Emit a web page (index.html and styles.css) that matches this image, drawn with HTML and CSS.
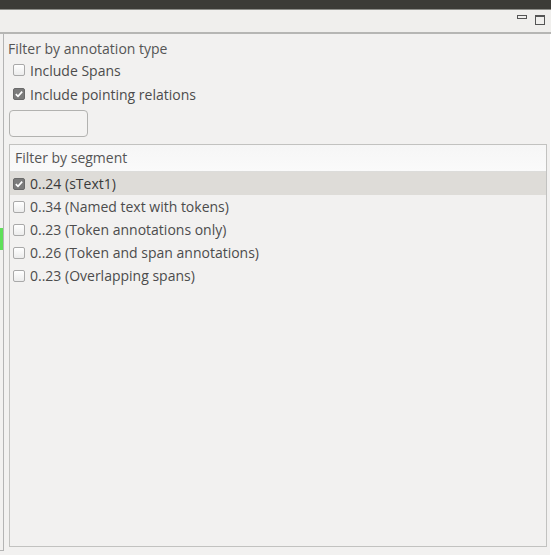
FILE: index.html
```html
<!DOCTYPE html>
<html>
<head>
<meta charset="utf-8">
<link rel="stylesheet" href="styles.css">
</head>
<body>
<div class="titlebar"></div>
<div class="toolbar">
  <span class="tb-min"></span>
  <span class="tb-max"></span>
</div>
<div class="main">
  <div class="stub"><div class="green"></div></div>
  <div class="panel">
    <div class="group-title">Filter by annotation type</div>
    <label class="opt"><span class="cb"></span>Include Spans</label>
    <label class="opt"><span class="cb checked"><svg viewBox="0 0 12 12" width="12" height="12"><path d="M2.8 6.1 L5 8.3 L9.2 3.6" fill="none" stroke="#fff" stroke-width="1.7"/></svg></span>Include pointing relations</label>
    <div class="input"></div>
    <div class="list">
      <div class="list-head">Filter by segment</div>
      <div class="row sel"><span class="cb checked"><svg viewBox="0 0 12 12" width="12" height="12"><path d="M2.8 6.1 L5 8.3 L9.2 3.6" fill="none" stroke="#fff" stroke-width="1.7"/></svg></span>0..24 (sText1)</div>
      <div class="row"><span class="cb"></span>0..34 (Named text with tokens)</div>
      <div class="row"><span class="cb"></span>0..23 (Token annotations only)</div>
      <div class="row"><span class="cb"></span>0..26 (Token and span annotations)</div>
      <div class="row"><span class="cb"></span>0..23 (Overlapping spans)</div>
    </div>
  </div>
</div>
</body>
</html>
```
FILE: styles.css
```css
html, body {
  margin: 0;
  padding: 0;
}
body {
  width: 551px;
  height: 555px;
  overflow: hidden;
  background: #f2f1f0;
  font-family: "Open Sans", "DejaVu Sans", sans-serif;
  font-size: 13px;
  color: #4c4c4c;
}
.titlebar {
  height: 9px;
  background: #3c3b37;
  border-bottom: 1px solid #8c8c88;
}
.toolbar {
  height: 22px;
  background: #f0efed;
  border-bottom: 2px solid #b6b6b4;
  display: flex;
  justify-content: flex-end;
  align-items: flex-start;
  padding-right: 6px;
}
.tb-min {
  width: 8px;
  height: 2px;
  border: 1px solid #555;
  margin-top: 5px;
  margin-right: 8px;
}
.tb-max {
  width: 8px;
  height: 7px;
  border: 1px solid #555;
  border-top-width: 2px;
  margin-top: 5px;
}
.main {
  display: flex;
  height: 521px;
}
.stub {
  width: 3px;
  height: 322px;
  border-right: 1px solid #b4b4b4;
  border-bottom: 1px solid #b4b4b4;
  padding-top: 194px;
}
.green {
  width: 3px;
  height: 22px;
  background: #5fe05a;
}
.panel {
  flex: 1;
  padding: 5px 3px 0 4px;
  border-right: 1px solid #ffffff;
}
.group-title {
  height: 19px;
  line-height: 19px;
  font-size: 14px;
  color: #555;
}
.opt {
  display: flex;
  align-items: center;
  height: 24px;
  padding-left: 5px;
  font-size: 14px;
  color: #4c4c4c;
}
.cb {
  box-sizing: border-box;
  width: 12px;
  height: 12px;
  border: 1px solid #a9a9a9;
  border-radius: 2px;
  background: linear-gradient(#ffffff, #ececec);
  margin-right: 5px;
  display: flex;
  flex-shrink: 0;
}
.cb.checked {
  background: #7b7b7b;
  border-color: #6a6a6a;
}
.cb svg {
  margin: -1px;
}
.input {
  box-sizing: border-box;
  width: 79px;
  height: 27px;
  margin: 4px 0 0 1px;
  border: 1px solid #b2b2b0;
  border-radius: 4px;
  background: #f4f3f2;
}
.list {
  box-sizing: border-box;
  margin: 7px 0 0 1px;
  height: 403px;
  border: 1px solid #c2c2c0;
  background: #f2f1f0;
}
.list-head {
  height: 26px;
  line-height: 26px;
  padding-left: 5px;
  background: linear-gradient(#f6f6f6, #fafafa);
  border-bottom: 1px solid #dcdcda;
  font-size: 14px;
  color: #555;
}
.row {
  display: flex;
  align-items: center;
  height: 23px;
  padding-left: 3px;
  font-size: 14px;
  color: #4c4c4c;
}
.row.sel {
  background: #dedcd8;
  color: #3a3a3a;
}
```
